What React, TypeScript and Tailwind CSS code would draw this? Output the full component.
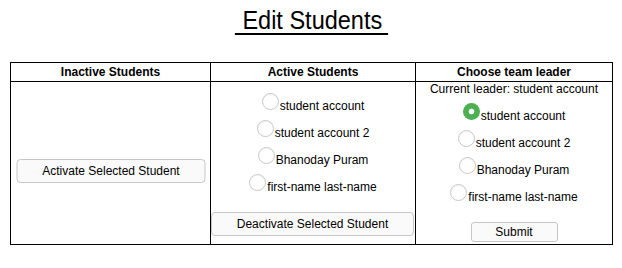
import React from "react";

function Radio({ checked = false }: { checked?: boolean }) {
  return checked ? (
    <span className="inline-block h-[17px] w-[17px] shrink-0 rounded-full bg-[radial-gradient(circle,#ffffff_2.5px,#4caf50_3.2px)]" />
  ) : (
    <span className="inline-block h-[17px] w-[17px] shrink-0 rounded-full border border-[#c8c8c8] bg-white shadow-[inset_0_1px_1px_rgba(0,0,0,0.05)]" />
  );
}

function Row({ label, checked = false }: { label: string; checked?: boolean }) {
  return (
    <div className="flex h-[27px] items-baseline justify-center">
      <Radio checked={checked} />
      <span className="ml-[1px] leading-[14px]">{label}</span>
    </div>
  );
}

const names = ["student account", "student account 2", "Bhanoday Puram", "first-name last-name"];

export default function App() {
  return (
    <div className="h-[268px] w-[622px] bg-white text-[12px] text-black [font-family:'Liberation_Sans',Arial,sans-serif]">
      <div className="flex justify-center pt-[8px]">
        <h1 className="origin-center scale-x-[0.94] border-b-2 border-black pl-[8px] pr-[6px] text-[25px] leading-[25px]">
          Edit Students
        </h1>
      </div>
      <div className="ml-[10px] mt-[27px] grid w-[603px] grid-cols-[200px_205px_196px] border border-black">
        <div className="flex h-[19px] items-center justify-center border-b border-r border-black font-bold">Inactive Students</div>
        <div className="flex h-[19px] items-center justify-center border-b border-r border-black font-bold">Active Students</div>
        <div className="flex h-[19px] items-center justify-center border-b border-black font-bold">Choose team leader</div>

        <div className="flex h-[162px] flex-col items-center border-r border-black pt-[77px]">
          <button className="h-[24px] w-[189px] translate-x-[0.5px] rounded-[4px] border border-[#c6c6c6] bg-[#fafafa]">
            Activate Selected Student
          </button>
        </div>
        <div className="flex h-[162px] flex-col border-r border-black pt-[11px]">
          {names.map((n) => (
            <Row key={n} label={n} />
          ))}
          <button className="mt-[11px] h-[24px] w-[203px] rounded-[4px] border border-[#c6c6c6] bg-[#fafafa]">
            Deactivate Selected Student
          </button>
        </div>
        <div className="flex h-[162px] flex-col items-stretch">
          <div className="h-[14px] text-center leading-[14px]">Current leader: student account</div>
          <div className="mt-[7px] flex flex-col">
            {names.map((n, i) => (
              <Row key={n} label={n} checked={i === 0} />
            ))}
          </div>
          <div className="mt-[11px] flex justify-center">
            <button className="h-[20px] w-[87px] rounded-[3px] border border-[#c6c6c6] bg-[#fafafa]">Submit</button>
          </div>
        </div>
      </div>
    </div>
  );
}
